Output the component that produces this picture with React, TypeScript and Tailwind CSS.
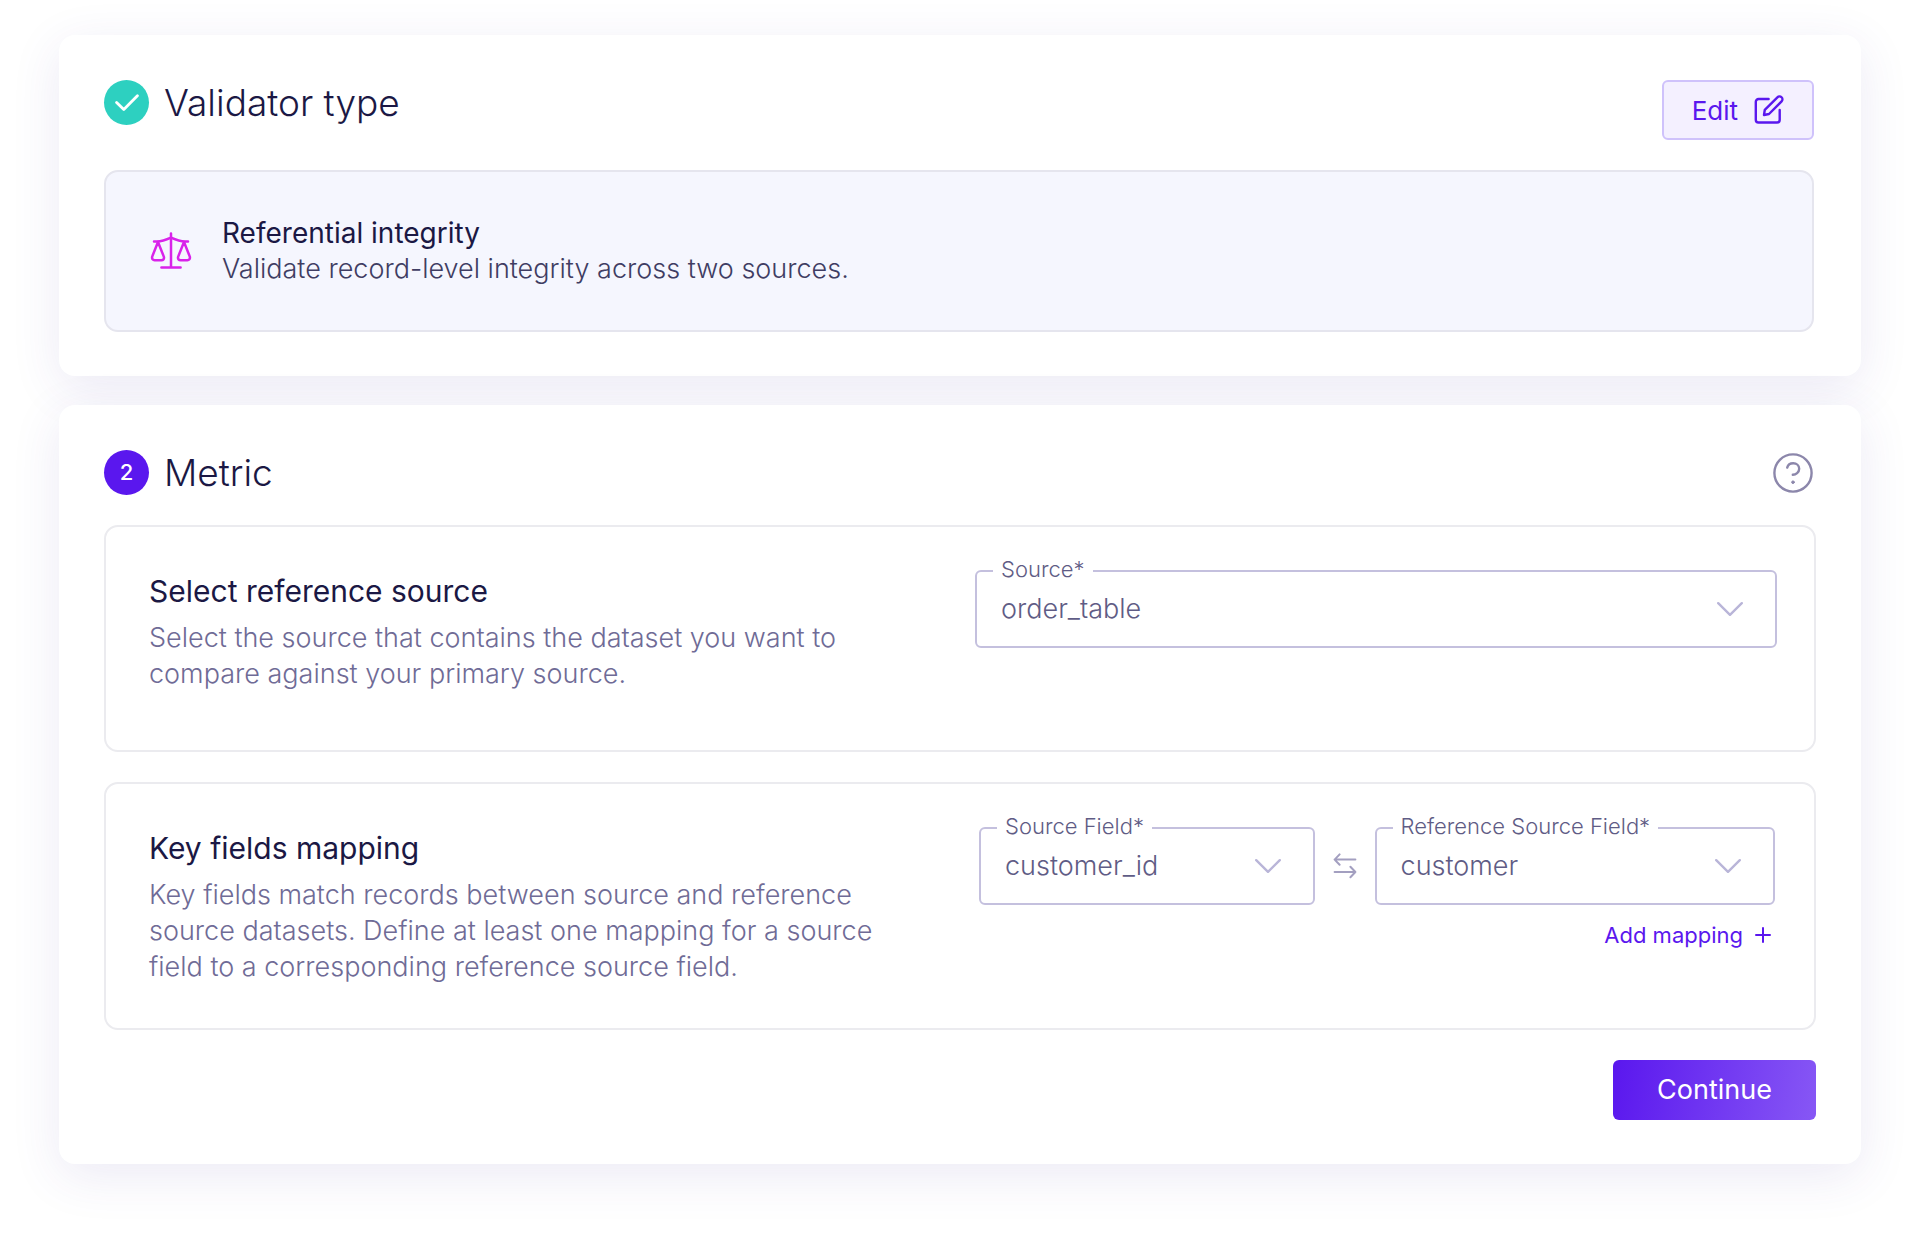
import * as React from 'react';

type FieldProps = {
  id: string;
  label: string;
  options: string[];
  className?: string;
};

function SelectField({ id, label, options, className }: FieldProps) {
  return (
    <div className={`relative ${className ?? ''}`}>
      <label
        htmlFor={id}
        className="absolute -top-4 left-[18px] bg-white px-2 text-[22px] leading-[30px] font-light text-[#5f5c85]"
      >
        {label}
      </label>
      <select
        id={id}
        className="block h-[78px] w-full appearance-none rounded-md border-2 border-[#c4c0de] bg-white pl-6 pr-16 text-[27px] font-light text-[#5f5c85]"
      >
        {options.map((option) => (
          <option key={option}>{option}</option>
        ))}
      </select>
      <svg
        viewBox="0 0 26 14"
        className="pointer-events-none absolute top-8 right-[34px] h-[14px] w-[26px] fill-none stroke-[#b9b5d8] stroke-[2.4]"
        strokeLinecap="round"
        strokeLinejoin="round"
      >
        <path d="M1.2 1.2 13 12.8 24.8 1.2" />
      </svg>
    </div>
  );
}

function CheckBadge() {
  return (
    <div className="flex h-[45px] w-[45px] items-center justify-center rounded-full bg-[#2dd0c0]">
      <svg viewBox="0 0 24 18" className="h-[18px] w-6 fill-none stroke-white stroke-[2.8]">
        <path d="M1.6 8.4 8.8 15.6 22.4 1.8" strokeLinecap="round" strokeLinejoin="round" />
      </svg>
    </div>
  );
}

function ScalesIcon() {
  return (
    <svg
      viewBox="0 0 42 38"
      className="h-[38px] w-[42px] shrink-0 fill-none stroke-[#d922ea] stroke-[2.5]"
      strokeLinecap="round"
      strokeLinejoin="round"
    >
      <path d="M21 1.5V35.5M11.4 35.5H30.6" />
      <path d="M4 9.4H7C12 9.4 17 7.4 21 5.6C25 7.4 30 9.4 35 9.4H38" />
      <path d="M8 10 2.2 24.6C1.6 27 3 28.3 4.6 28.3H11.4C13 28.3 14.6 27 13.8 24.6Z" />
      <path d="M34 10 28.2 24.6C27.4 27 29 28.3 30.6 28.3H37.4C39 28.3 40.4 27 39.8 24.6Z" />
    </svg>
  );
}

function EditIcon() {
  return (
    <svg
      viewBox="0 0 30 30"
      className="h-[30px] w-[30px] fill-none stroke-[#5a17ee] stroke-[2.4]"
      strokeLinecap="round"
      strokeLinejoin="round"
    >
      <path d="M14.6 4H4.5A2.7 2.7 0 0 0 1.8 6.7V24.8A2.7 2.7 0 0 0 4.5 27.5H23A2.7 2.7 0 0 0 25.7 24.8V15" />
      <path d="M10 20 10.8 14.8 23.4 2.3A2.9 2.9 0 0 1 27.6 6.4L15 19Z" />
    </svg>
  );
}

function HelpIcon() {
  return (
    <svg
      viewBox="0 0 40 40"
      className="h-10 w-10 fill-none stroke-[#8c87ab] stroke-[2.4]"
      strokeLinecap="round"
      strokeLinejoin="round"
    >
      <circle cx="20" cy="20" r="18.6" />
      <path d="M14.2 14.6C15 11.6 17.4 10.3 20.2 10.3C23.6 10.3 26.2 12.7 26.2 15.8C26.2 19.4 22.8 21.6 19.8 21.8" />
      <circle cx="20" cy="29.2" r="1.3" className="fill-[#8c87ab] stroke-1" />
    </svg>
  );
}

function SwapIcon() {
  return (
    <svg
      viewBox="0 0 24 26"
      className="h-[26px] w-6 shrink-0 fill-none stroke-[#a39fc0] stroke-2"
      strokeLinecap="round"
      strokeLinejoin="round"
    >
      <path d="M22.4 6.6H1.6M6.6 1.4 1.6 6.6 6.6 11.8" />
      <path d="M1.6 19H22.4M17.4 13.8 22.4 19 17.4 24.2" />
    </svg>
  );
}

export default function App() {
  return (
    <main className="flex min-h-screen flex-col gap-[29px] bg-white px-[59px] pt-[35px] pb-[72px] font-['Inter',sans-serif] text-[#1b1844]">
      <section
        id="validator-type"
        className="rounded-2xl bg-white pt-[45px] pr-[47px] pb-11 pl-[45px] shadow-[0_12px_50px_rgba(70,45,160,0.10)]"
      >
        <div className="mb-[30px] flex items-start justify-between">
          <div className="flex items-center gap-[15px]">
            <CheckBadge />
            <h2 className="text-[37px] leading-[45px] font-light">Validator type</h2>
          </div>
          <button className="flex h-[60px] items-center gap-4 rounded-md border-2 border-[#cfc2fb] bg-[#f4f0ff] px-7 text-[26px] text-[#5a17ee]">
            Edit
            <EditIcon />
          </button>
        </div>
        <div className="flex items-center gap-[30px] rounded-[14px] border-2 border-[#e5e5ee] bg-[#f5f6fe] px-11 py-[43px]">
          <ScalesIcon />
          <div className="leading-[36px]">
            <h3 className="text-[28px]">Referential integrity</h3>
            <p className="text-[27px] font-light text-[#3f3d63]">
              Validate record-level integrity across two sources.
            </p>
          </div>
        </div>
      </section>

      <section
        id="metric"
        className="rounded-2xl bg-white px-[45px] pt-[45px] pb-11 shadow-[0_12px_50px_rgba(70,45,160,0.10)]"
      >
        <div className="mb-[30px] flex items-center justify-between pr-[3px]">
          <div className="flex items-center gap-[15px]">
            <div className="flex h-[45px] w-[45px] items-center justify-center rounded-full bg-[#5a17ee] text-[22px] font-medium text-white">
              2
            </div>
            <h2 className="text-[37px] leading-[45px] font-light">Metric</h2>
          </div>
          <button aria-label="Help">
            <HelpIcon />
          </button>
        </div>

        <div className="grid min-h-[227px] grid-cols-2 gap-6 rounded-[14px] border-2 border-[#ebebef] pt-[43px] pr-[37px] pb-[43px] pl-[43px]">
          <div className="pr-10">
            <h3 className="mb-2 text-[30px] leading-[42px]">Select reference source</h3>
            <p className="text-[27px] leading-[36px] font-light text-[#6f6b96]">
              Select the source that contains the dataset you want to compare against your primary source.
            </p>
          </div>
          <SelectField id="source" label="Source*" options={['order_table']} />
        </div>

        <div className="mt-[30px] grid grid-cols-2 gap-6 rounded-[14px] border-2 border-[#ebebef] pt-[43px] pr-[37px] pb-[43px] pl-[43px]">
          <div className="pr-10">
            <h3 className="mb-2 text-[30px] leading-[42px]">Key fields mapping</h3>
            <p className="text-[27px] leading-[36px] font-light text-[#6f6b96]">
              Key fields match records between source and reference source datasets. Define at least one mapping for a
              source field to a corresponding reference source field.
            </p>
          </div>
          <div className="pr-0.5 pl-1">
            <div className="flex items-center gap-[18px]">
              <SelectField id="source-field" label="Source Field*" options={['customer_id']} className="flex-[336]" />
              <SwapIcon />
              <SelectField
                id="reference-field"
                label="Reference Source Field*"
                options={['customer']}
                className="flex-[401]"
              />
            </div>
            <div className="mt-[15px] flex justify-end pr-1">
              <button className="flex items-center gap-3 text-[22px] leading-[30px] text-[#5a17ee]">
                Add mapping
                <svg viewBox="0 0 16 16" className="h-4 w-4 stroke-[#5a17ee] stroke-2" strokeLinecap="round">
                  <path d="M8 1V15M1 8H15" />
                </svg>
              </button>
            </div>
          </div>
        </div>

        <div className="mt-[30px] flex justify-end">
          <button className="h-[60px] rounded-md bg-linear-[100deg] from-[#5a17ee] to-[#8757f5] px-11 text-[27px] text-white">
            Continue
          </button>
        </div>
      </section>
    </main>
  );
}
